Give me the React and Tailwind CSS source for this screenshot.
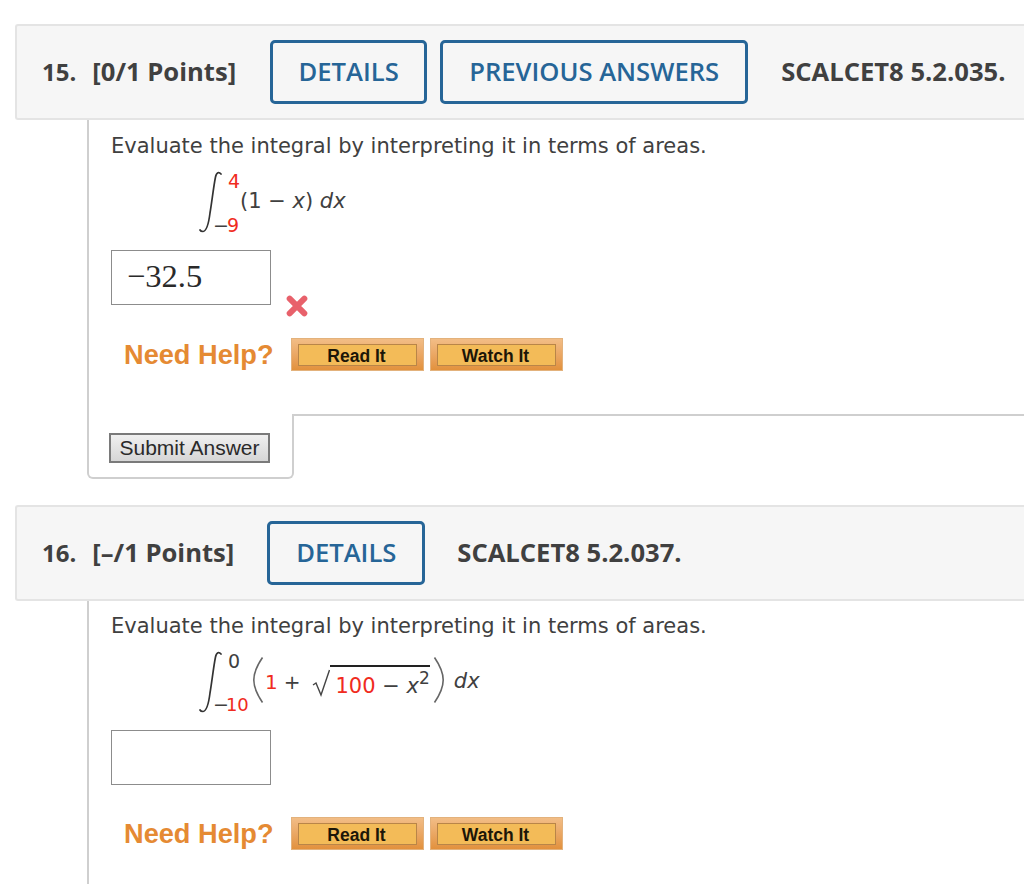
import React from 'react';

const headFont = "font-['Open_Sans',sans-serif]";
const bodyFont = "font-['DejaVu_Sans',sans-serif]";

function HeaderButton({ children, className }) {
  return (
    <div className={`flex h-[64px] items-center justify-center rounded-[5px] border-[3px] border-[#266597] text-[25.6px] font-semibold text-[#266597] ${className}`}>
      {children}
    </div>
  );
}

function QuestionHeader({ number, points, gapLeft, buttons, code, codeGap }) {
  return (
    <div className={`ml-[15px] flex h-[96px] items-center rounded-l-[3px] border-y-2 border-l-2 border-[#e4e4e4] bg-[#f6f6f6] text-[#404040] ${headFont}`}>
      <span className="ml-[25px] text-[24px] font-bold leading-none">{number}</span>
      <span className="ml-[16px] text-[25.6px] font-bold leading-none">{points}</span>
      <div className={`flex gap-[13px] ${gapLeft}`}>{buttons}</div>
      <span className={`text-[25.6px] font-bold leading-none ${codeGap}`}>{code}</span>
    </div>
  );
}

function IntegralSign() {
  return (
    <svg width="24" height="62" viewBox="0 0 24 62" className="shrink-0">
      <path
        d="M23 3C21 .5 18.5 1 17.5 6C15.5 16 14 30 12 42C11 50 9.5 60 5 60.5C3.5 60.5 2.5 60 2 59"
        fill="none"
        stroke="#333"
        strokeWidth="1.7"
        strokeLinecap="round"
      />
    </svg>
  );
}

function Paren({ flip, className }) {
  return (
    <svg width="12" height="48" viewBox="0 0 12 48" className={`shrink-0 ${flip ? '-scale-x-100' : ''} ${className}`}>
      <path d="M10.5 1.5C4 11 1.8 17 1.8 24C1.8 31 4 37 10.5 46.5" fill="none" stroke="#666" strokeWidth="1.6" />
    </svg>
  );
}

function HelpRow() {
  return (
    <div className="flex items-center">
      <span className="ml-[13px] w-[167px] font-['Liberation_Sans',sans-serif] text-[27.2px] font-bold leading-none text-[#e58a33]">Need Help?</span>
      <div className="flex gap-[6px]">
        <HelpButton label="Read It" />
        <HelpButton label="Watch It" />
      </div>
    </div>
  );
}

function HelpButton({ label }) {
  return (
    <div className="h-[33px] w-[133px] border border-[#e3b27c] bg-gradient-to-b from-[#f2bd86] to-[#e2913c] p-[5px_6px_4px_6px]">
      <div className="flex h-full items-center justify-center border border-[#b98548] bg-[#f3bb58] pr-[2px] pt-[3px] font-['Liberation_Sans',sans-serif] text-[17.5px] font-bold leading-none text-[#1c1608]">
        {label}
      </div>
    </div>
  );
}

function AnswerBox({ children }) {
  return (
    <div className="flex h-[55px] w-[160px] items-center border border-[#8c8c8c] bg-white pb-[3px] pl-[15px] font-['Liberation_Serif',serif] text-[32.5px] leading-none text-[#2a2a2a]">
      {children}
    </div>
  );
}

export default function App() {
  return (
    <div className={`h-[884px] w-[1024px] overflow-hidden bg-white pt-[24px] ${bodyFont}`}>
      <QuestionHeader
        number="15."
        points="[0/1 Points]"
        gapLeft="ml-[34px]"
        buttons={
          <>
            <HeaderButton className="w-[157px]">DETAILS</HeaderButton>
            <HeaderButton className="w-[308px]">PREVIOUS ANSWERS</HeaderButton>
          </>
        }
        code="SCALCET8 5.2.035."
        codeGap="ml-[33px]"
      />

      <div className="ml-[87px] h-[294px] border-l-2 border-[#cfcfcf] pl-[22px]">
        <p className="pt-[13px] text-[21px] leading-[26px] text-[#404040]">Evaluate the integral by interpreting it in terms of areas.</p>
        <div className="ml-[87px] mt-[12px] flex h-[62px] items-center text-[#404040]">
          <IntegralSign />
          <div className="-ml-[2px] flex h-[62px] w-[24px] flex-col justify-between text-[19px] leading-[20px]">
            <span className="pl-[8px] text-[#f02b20]">4</span>
            <span className="-ml-[7px] translate-y-[2px] whitespace-nowrap"><span className="tracking-[-2px]">−</span><span className="text-[#f02b20]">9</span></span>
          </div>
          <span className="-ml-[4px] text-[21px]">(1 − <i>x</i>) <i>dx</i></span>
        </div>
        <div className="mt-[17px] flex">
          <AnswerBox>−32.5</AnswerBox>
          <svg width="22" height="22" viewBox="0 0 24 24" className="ml-[15px] mt-[45px]">
            <path d="M4 4 L20 20 M20 4 L4 20" stroke="#e8616b" strokeWidth="6.5" strokeLinecap="round" />
          </svg>
        </div>
        <div className="mt-[21px]">
          <HelpRow />
        </div>
      </div>

      <div className="flex h-[65px]">
        <div className="ml-[87px] h-[65px] w-[207px] rounded-b-[6px] border-x-2 border-b-2 border-[#cfcfcf] pl-[20px] pt-[19px]">
          <div className="flex h-[30px] w-[161px] items-center justify-center border-2 border-[#7a7a7a] bg-gradient-to-b from-[#f0f0f0] to-[#d6d6d6] pb-[2px] font-['Liberation_Sans',sans-serif] text-[21px] leading-none text-[#2a2a2a]">
            Submit Answer
          </div>
        </div>
        <div className="flex-1 border-t-2 border-[#cfcfcf]" />
      </div>

      <div className="mt-[26px]">
        <QuestionHeader
          number="16."
          points="[–/1 Points]"
          gapLeft="ml-[33px]"
          buttons={<HeaderButton className="w-[158px]">DETAILS</HeaderButton>}
          code="SCALCET8 5.2.037."
          codeGap="ml-[32px]"
        />
      </div>

      <div className="ml-[87px] h-[300px] border-l-2 border-[#cfcfcf] pl-[22px]">
        <p className="pt-[12px] text-[21px] leading-[26px] text-[#404040]">Evaluate the integral by interpreting it in terms of areas.</p>
        <div className="ml-[87px] mt-[12px] flex h-[62px] items-center text-[#404040]">
          <IntegralSign />
          <div className="-ml-[2px] flex h-[62px] w-[36px] flex-col justify-between text-[19px] leading-[20px]">
            <span className="pl-[8px]">0</span>
            <span className="-ml-[7px] translate-y-[2px] whitespace-nowrap"><span className="tracking-[-3px]">−</span><span className="text-[18px] text-[#f02b20]">10</span></span>
          </div>
          <Paren className="-ml-[4px] -mt-[5px]" />
          <span className="ml-[1px] text-[20px] text-[#f02b20]">1</span>
          <span className="ml-[6px] text-[20px]">+</span>
          <svg width="18" height="28" viewBox="0 0 18 28" className="ml-[11px] mt-[2px] shrink-0">
            <path d="M1 16L4 14L9 26L17.5 1" fill="none" stroke="#444" strokeWidth="1.4" />
          </svg>
          <span className="-mt-[5px] h-[30px] whitespace-nowrap border-t-2 border-[#222] pl-[6px] text-[21px] leading-[38px]">
            <span className="text-[#f02b20]">100</span> − <i>x</i><sup className="text-[17px]">2</sup>
          </span>
          <Paren flip className="ml-[3px] -mt-[5px]" />
          <span className="ml-[9px] text-[21px]"><i>dx</i></span>
        </div>
        <div className="mt-[17px]">
          <AnswerBox />
        </div>
        <div className="mt-[32px]">
          <HelpRow />
        </div>
      </div>
    </div>
  );
}
